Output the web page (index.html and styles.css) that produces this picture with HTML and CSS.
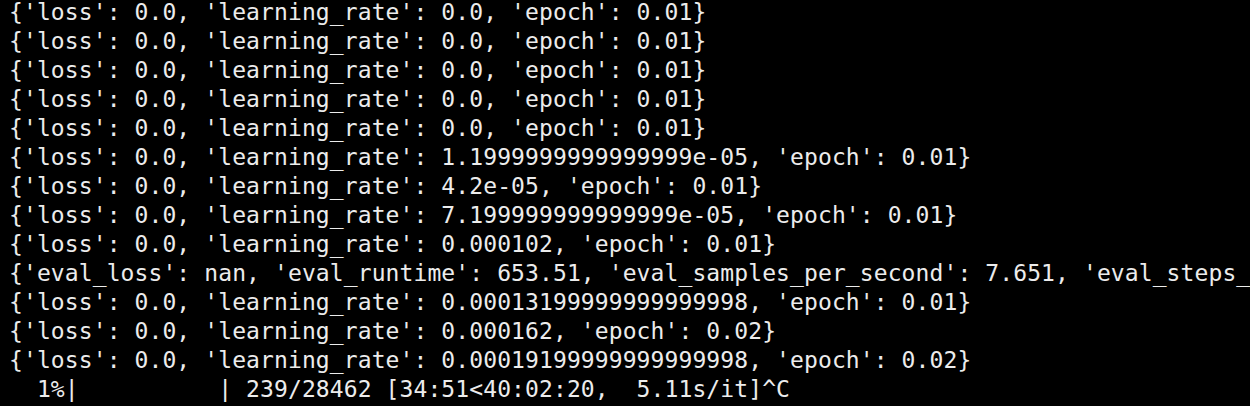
FILE: index.html
```html
<!DOCTYPE html>
<html>
<head>
<meta charset="utf-8">
<link rel="stylesheet" href="styles.css">
</head>
<body>
<pre class="term">{'loss': 0.0, 'learning_rate': 0.0, 'epoch': 0.01}
{'loss': 0.0, 'learning_rate': 0.0, 'epoch': 0.01}
{'loss': 0.0, 'learning_rate': 0.0, 'epoch': 0.01}
{'loss': 0.0, 'learning_rate': 0.0, 'epoch': 0.01}
{'loss': 0.0, 'learning_rate': 0.0, 'epoch': 0.01}
{'loss': 0.0, 'learning_rate': 1.1999999999999999e-05, 'epoch': 0.01}
{'loss': 0.0, 'learning_rate': 4.2e-05, 'epoch': 0.01}
{'loss': 0.0, 'learning_rate': 7.199999999999999e-05, 'epoch': 0.01}
{'loss': 0.0, 'learning_rate': 0.000102, 'epoch': 0.01}
{'eval_loss': nan, 'eval_runtime': 653.51, 'eval_samples_per_second': 7.651, 'eval_steps_per_second': 0.957, 'epoch': 0.01}
{'loss': 0.0, 'learning_rate': 0.00013199999999999998, 'epoch': 0.01}
{'loss': 0.0, 'learning_rate': 0.000162, 'epoch': 0.02}
{'loss': 0.0, 'learning_rate': 0.00019199999999999998, 'epoch': 0.02}
  1%|          | 239/28462 [34:51&lt;40:02:20,  5.11s/it]^C</pre>
</body>
</html>
```
FILE: styles.css
```css
html, body {
  margin: 0;
  padding: 0;
  background: #000;
  width: 1250px;
  height: 406px;
  overflow: hidden;
}
.term {
  margin: -2px 0 0 0;
  padding: 0 0 0 9px;
  font-family: "DejaVu Sans Mono", monospace;
  font-size: 23px;
  letter-spacing: 0.1px;
  line-height: 29px;
  color: #ececec;
  white-space: pre;
  overflow: hidden;
}
```
